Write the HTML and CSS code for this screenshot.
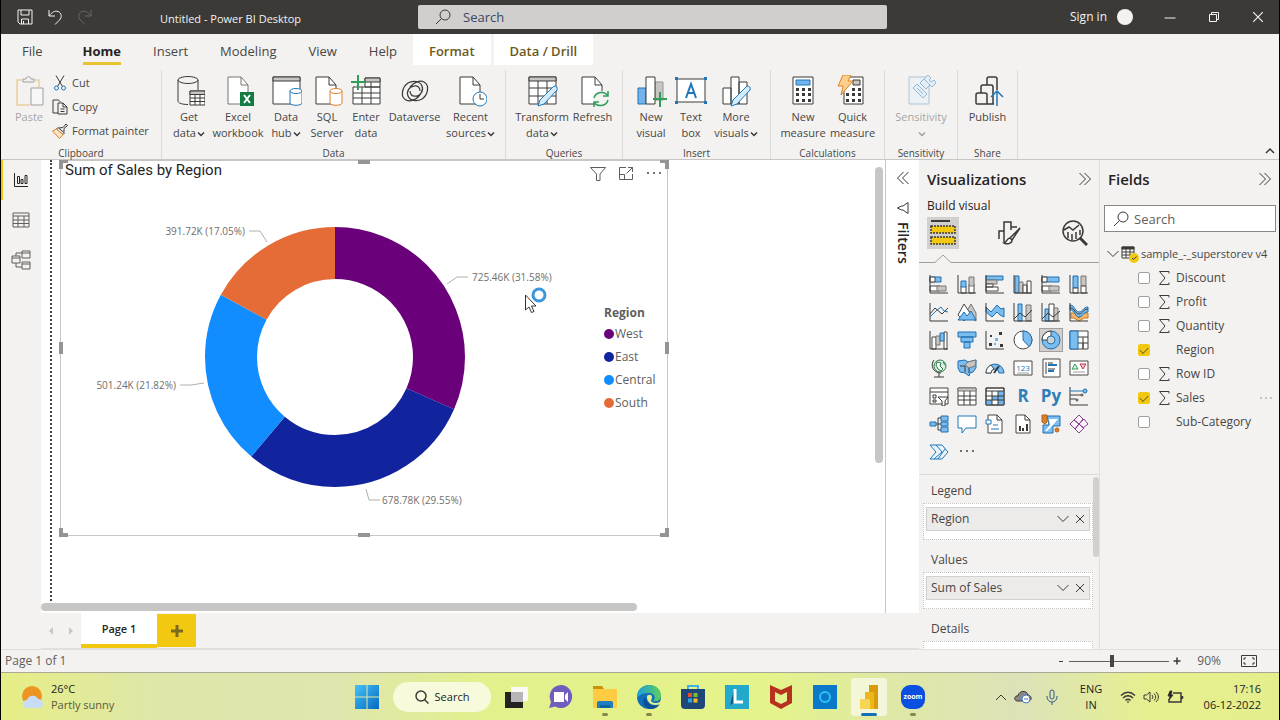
FILE: index.html
```html
<!DOCTYPE html>
<html lang="en">
<head>
    <meta charset="UTF-8">
    <meta name="viewport" content="width=device-width, initial-scale=1.0">
    <title>Untitled - Power BI Desktop</title>
    <link rel="stylesheet" href="styles.css">
</head>
<body>
    <svg class="sprite" aria-hidden="true">
        <symbol id="chev" viewBox="0 0 8 6"><path d="M1 1.5l3 3 3-3"/></symbol>
        <symbol id="chev-wide" viewBox="0 0 12 8"><path d="M0.5 1l5.5 5.5 5.500-5.500"/></symbol>
        <symbol id="dbl-right" viewBox="0 0 14 14"><path d="M1.500 1l6 6-6 6M6.500 1l6 6-6 6"/></symbol>
        <symbol id="dbl-left" viewBox="0 0 14 14"><path d="M7.500 1l-6 6 6 6M12.500 1l-6 6 6 6"/></symbol>
        <symbol id="cross" viewBox="0 0 10 10"><path d="M1 1l8 8M9 1l-8 8"/></symbol>
        <symbol id="lens" viewBox="0 0 16 16"><circle cx="10" cy="6" r="5"/><path d="M6.500 9.500L1 15"/></symbol>
        <symbol id="sigma" viewBox="0 0 12 16"><path d="M11 3.500V1.500H1.500L7 8l-5.500 6.500H11v-2"/></symbol>
    </svg>

    <header class="titlebar">
        <div class="title-left">
            <button class="plain" aria-label="Save"><svg class="icon" width="16" height="16" viewBox="0 0 16 16"><path d="M1 1h14v14H3l-2-2zM4 1v5h8V1M4.500 15v-5h7v5M6.500 12v3"/></svg></button>
            <button class="plain" aria-label="Undo"><svg class="icon" width="16" height="16" viewBox="0 0 16 16"><path d="M2 1v6h6M2 7c3-4 6-5.500 9-4.500 4 1.500 4 6 1.500 8.500L8 15.500"/></svg></button>
            <button class="plain dim" aria-label="Redo"><svg class="icon" width="16" height="16" viewBox="0 0 16 16"><path d="M14 1v6H8M14 7c-3-4-6-5.500-9-4.500-4 1.500-4 6-1.500 8.500L8 15.500"/></svg></button>
            <span class="title">Untitled - Power BI Desktop</span>
        </div>
        <label class="title-search">
            <svg class="icon" width="16" height="16"><use href="#lens"/></svg>
            <input type="text" placeholder="Search" aria-label="Search">
        </label>
        <div class="title-right">
            <a href="#" class="signin">Sign in</a>
            <span class="avatar"></span>
            <button class="plain" aria-label="Minimize"><svg class="icon" width="12" height="12" viewBox="0 0 12 12"><path d="M0.500 7h11"/></svg></button>
            <button class="plain" aria-label="Restore"><svg class="icon" width="12" height="12" viewBox="0 0 12 12"><path d="M1.500 3.500h7v7h-7zM3.500 3.500v-2h7v7h-2"/></svg></button>
            <button class="plain" aria-label="Close"><svg class="icon" width="12" height="12"><use href="#cross"/></svg></button>
        </div>
    </header>

    <nav class="tabs">
        <a href="#" class="tab file">File</a>
        <a href="#" class="tab active">Home</a>
        <a href="#" class="tab">Insert</a>
        <a href="#" class="tab">Modeling</a>
        <a href="#" class="tab">View</a>
        <a href="#" class="tab">Help</a>
        <a href="#" class="tab context">Format</a>
        <a href="#" class="tab context">Data / Drill</a>
    </nav>

    <section class="ribbon">
        <div class="group clipboard">
            <div class="tools">
                <button class="tool faded">
                    <svg class="icon" width="32" height="32" viewBox="0 0 32 32"><path stroke="#e8a33d" stroke-width="1.500" d="M9 5H4v25h13M22 5h4v7"/><path d="M10 7V4h3c0-3 5-3 5 0h3v3z"/><path fill="#fff" d="M18 13h12v17H18z"/></svg>
                    <span>Paste</span>
                </button>
                <div class="stack">
                    <button class="small"><svg class="icon" width="16" height="16" viewBox="0 0 16 16"><path d="M4 0.500l6.500 11M12 0.500l-6.500 11"/><g stroke="#1f77b8"><circle cx="4.500" cy="13" r="2"/><circle cx="11.500" cy="13" r="2"/></g></svg>Cut</button>
                    <button class="small"><svg class="icon" width="16" height="16" viewBox="0 0 16 16"><path d="M6 14H1V1h5.500l2 2M6 4h5l4 4v7H6zM11 4v4h4M8.500 10h4M8.500 12.500h4"/></svg>Copy</button>
                    <button class="small"><svg class="icon" width="16" height="16" viewBox="0 0 16 16"><path d="M7 5l4-0.500L14 1l1.500 1.500L12 5.500 12 9M6 4.500l6.500 5.500-1.500 1.500L4.500 6z"/><path stroke="#d9822b" fill="#fbe3c4" d="M4.500 6L0.500 8l7 7.500 3.500-4z"/></svg>Format painter</button>
                </div>
            </div>
            <div class="caption">Clipboard</div>
        </div>

        <div class="group data">
            <div class="tools">
                <button class="tool"><svg class="icon" width="32" height="32" viewBox="0 0 32 32"><ellipse cx="15" cy="5" rx="10" ry="3.500"/><path d="M5 5v21c0 2 4 3.500 10 3.500M25 5v10"/><path fill="#fff" d="M17 16h15v14H17z"/><path fill="#c8c6c4" d="M17 16h15v3.500H17z"/><path d="M17 23h15M17 26.500h15M22 19v11M27 19v11"/></svg><span>Get<br>data<svg class="icon chev"><use href="#chev"/></svg></span></button>
                <button class="tool"><svg class="icon" width="32" height="32" viewBox="0 0 32 32"><path fill="#fff" stroke="#797775" d="M6 2h13l7 8v19H6z"/><path stroke="#797775" d="M19 2v8h7"/><path fill="#107c41" stroke="none" d="M18 17h14v14H18z"/><path stroke="#fff" stroke-width="2" d="M22 20l6 8M28 20l-6 8"/></svg><span>Excel<br>workbook</span></button>
                <button class="tool"><svg class="icon" width="32" height="32" viewBox="0 0 32 32"><path fill="#fff" d="M3 2h27v27H3z"/><path fill="#c8c6c4" d="M3 2h27v4H3z"/><path fill="#fff" stroke="#1f77b8" d="M20 16v12c0 3 12 3 12 0V16"/><ellipse cx="26" cy="16" rx="6" ry="2.500" fill="#fff" stroke="#1f77b8"/></svg><span>Data<br>hub<svg class="icon chev"><use href="#chev"/></svg></span></button>
                <button class="tool"><svg class="icon" width="32" height="32" viewBox="0 0 32 32"><path fill="#fff" d="M5 2h13l7 8v19H5z"/><path d="M18 2v8h7"/><path fill="#fff" stroke="#d9822b" d="M19 16v12c0 3 12 3 12 0V16"/><ellipse cx="25" cy="16" rx="6" ry="2.500" fill="#fff" stroke="#d9822b"/></svg><span>SQL<br>Server</span></button>
                <button class="tool"><svg class="icon" width="32" height="32" viewBox="0 0 32 32"><path fill="#fff" d="M3 12h27v17H3zM15 3h15v9H15z"/><path fill="#c8c6c4" d="M15 3h15v4H15z"/><path d="M3 18h27M3 23h27M12 12v17M21 7v22"/><path stroke="#2f9e5b" stroke-width="2" d="M8 0v15M1 7h14"/></svg><span>Enter<br>data</span></button>
                <button class="tool"><svg class="icon dv" width="32" height="32" viewBox="0 0 32 32"><path d="M21 20c-4 5-10 7-14 5-6-3-4-13 2-17 5-3 12-2 14 3 2 5-2 10-6 10-4 1-6-2-6-5"/><path d="M11 12c4-5 10-7 14-5 6 3 4 13-2 17-5 3-12 2-14-3-2-5 2-10 6-10 4-1 6 2 6 5"/></svg><span>Dataverse</span></button>
                <button class="tool"><svg class="icon" width="32" height="32" viewBox="0 0 32 32"><path fill="#fff" d="M5 2h13l7 8v19H5z"/><path d="M18 2v8h7"/><circle cx="25" cy="24" r="7" fill="#fff" stroke="#1f77b8"/><path d="M25 19v5h4"/></svg><span>Recent<br>sources<svg class="icon chev"><use href="#chev"/></svg></span></button>
            </div>
            <div class="caption">Data</div>
        </div>

        <div class="group queries">
            <div class="tools">
                <button class="tool"><svg class="icon" width="32" height="32" viewBox="0 0 32 32"><path fill="#fff" d="M3 2h27v27H3z"/><path fill="#c8c6c4" d="M3 2h27v4H3z"/><path d="M3 13h27M3 21h27M12 6v23M21 6v23"/><path fill="#d5ebfa" stroke="#1f77b8" d="M12 31l2-6 14-14q4 0 3 4L18 29z"/></svg><span>Transform<br>data<svg class="icon chev"><use href="#chev"/></svg></span></button>
                <button class="tool"><svg class="icon" width="32" height="32" viewBox="0 0 32 32"><path fill="#fff" d="M5 2h13l7 8v19H5z"/><path d="M18 2v8h7"/><circle cx="24" cy="24" r="8" fill="#f3f2f1" stroke="none"/><path stroke="#2f9e5b" stroke-width="1.500" d="M17 23c2-7 11-7 14-2M31 16v5h-5M31 25c-2 7-11 7-14 2M17 32v-5h5"/></svg><span>Refresh</span></button>
            </div>
            <div class="caption">Queries</div>
        </div>

        <div class="group insert">
            <div class="tools">
                <button class="tool"><svg class="icon" width="32" height="32" viewBox="0 0 32 32"><path fill="#71b3ea" stroke="#1f77b8" d="M3 13h8v16H3z"/><path fill="#c8c6c4" stroke="#979593" d="M20 7h8v18h-8z"/><path fill="#fff" d="M11 2h9v27h-9z"/><path stroke="#2f9e5b" stroke-width="2" d="M25 17v15M18 24h14"/></svg><span>New<br>visual</span></button>
                <button class="tool"><svg class="icon" width="32" height="32" viewBox="0 0 32 32"><path fill="#fff" d="M2 4h28v23H2z"/><path stroke="#1f77b8" stroke-width="2" d="M11 23l5-14 5 14M13 18h6"/><path fill="#1f77b8" stroke="none" d="M0 2h3v3H0zM29 2h3v3h-3zM0 26h3v3H0zM29 26h3v3h-3z"/></svg><span>Text<br>box</span></button>
                <button class="tool"><svg class="icon" width="32" height="32" viewBox="0 0 32 32"><path fill="#fff" d="M3 13h8v16H3zM19 7h8v22h-8zM11 2h8v27h-8z"/><path fill="#d5ebfa" stroke="#1f77b8" d="M11 31l2-6 14-14q4 0 3 4L17 29z"/></svg><span>More<br>visuals<svg class="icon chev"><use href="#chev"/></svg></span></button>
            </div>
            <div class="caption">Insert</div>
        </div>

        <div class="group calc">
            <div class="tools">
                <button class="tool"><svg class="icon" width="32" height="32" viewBox="0 0 32 32"><path fill="#fff" d="M6 2h20v27H6z"/><path fill="#71b3ea" stroke="#1f77b8" d="M9 5h14v5H9z"/><path stroke-width="3" stroke-dasharray="3 3" d="M9 14.500h15M9 19.500h15M9 25.500h15"/></svg><span>New<br>measure</span></button>
                <button class="tool"><svg class="icon" width="32" height="32" viewBox="0 0 32 32"><path fill="#fff" d="M7 2h19v27H7z"/><path fill="#c8c6c4" d="M16 5h7v5h-7z"/><path stroke-width="3" stroke-dasharray="3 3" d="M15 14.500h9M9 19.500h15M9 25.500h15"/><path fill="#fcd08a" stroke="#d9822b" d="M6 0h8l-3 6h5L4 20l2-9H1z"/></svg><span>Quick<br>measure</span></button>
            </div>
            <div class="caption">Calculations</div>
        </div>

        <div class="group sens">
            <div class="tools">
                <button class="tool faded"><svg class="icon" width="32" height="32" viewBox="0 0 32 32"><path fill="#e3f0fa" stroke="#5a8fb5" d="M4 2h20v27H4z"/><g stroke="#1f77b8" fill="#d5ebfa"><path d="M8 13l4-4 10 10-4 4zM12 13l6 6M15 8l4-4 6 6-4 4z"/><path d="M19 4l4-4 3 3-2 2 2 2 3-2 2 3-4 4z"/></g></svg><span>Sensitivity<br><svg class="icon chev"><use href="#chev"/></svg></span></button>
            </div>
            <div class="caption">Sensitivity</div>
        </div>

        <div class="group share">
            <div class="tools">
                <button class="tool"><svg class="icon pub" width="32" height="32" viewBox="0 0 32 32"><path d="M22 29H5q-1 0-1-1V20q0-2 2-2h7q2 0 2 2v9M9 18v-6q0-2 2-2h8q2 0 2 2v17M15 10V4q0-2 2-2h6q2 0 2 2v11"/><path stroke="#1f77b8" stroke-width="1.500" d="M25 31V17M19 22l6-6 6 6"/></svg><span>Publish</span></button>
            </div>
            <div class="caption">Share</div>
        </div>

        <button class="plain collapse" aria-label="Collapse ribbon"><svg class="icon" width="10" height="8" viewBox="0 0 10 8"><path stroke-width="1.500" d="M1 6l4-4 4 4"/></svg></button>
    </section>

    <main class="workspace">
        <nav class="rail">
            <button class="plain on" aria-label="Report"><svg class="icon" width="16" height="16" viewBox="0 0 16 16"><path d="M1.500 1v13.500H15M4.500 4.500h2v7h-2zM8 7.500h2v4H8zM12 3.500h2v8h-2z"/></svg></button>
            <button class="plain" aria-label="Data"><svg class="icon" width="18" height="16" viewBox="0 0 18 16"><path d="M1 1h16v14H1zM1 4h16M1 8h16M1 11.500h16M6 4v11M12 4v11"/></svg></button>
            <button class="plain" aria-label="Model"><svg class="icon" width="20" height="20" viewBox="0 0 20 20"><path d="M1 6h8v7H1zM1 8h8M11 1h8v7h-8zM11 3h8M11 12h8v7h-8zM11 14h8M5 6V3h6M5 13v4h6"/></svg></button>
        </nav>

        <div class="center">
            <div class="stage">
                <div class="canvas">
                    <div class="page">
                        <article class="visual">
                            <i class="grip tl"></i><i class="grip tm"></i><i class="grip tr"></i><i class="grip ml"></i>
                            <i class="grip mr"></i><i class="grip bl"></i><i class="grip bm"></i><i class="grip br"></i>
                            <header class="visual-head">
                                <h2>Sum of Sales by Region</h2>
                                <svg class="icon" width="16" height="16" viewBox="0 0 16 16"><path d="M0.500 1.500h15L10 8v6.500H6.500V8z"/></svg>
                                <svg class="icon" width="16" height="16" viewBox="0 0 16 16"><path d="M8 1.500H1.500v12H14.500V8M1.500 8.500h5v5M8.500 7.500l6-6M10 1.500h4.500V6"/></svg>
                                <svg class="icon more" width="16" height="16" viewBox="0 0 16 16"><circle cx="2" cy="7" r="1"/><circle cx="8" cy="7" r="1"/><circle cx="14" cy="7" r="1"/></svg>
                            </header>
                            <div class="visual-body">
                                <svg class="donut" viewBox="0 0 534 330">
                                    <g transform="rotate(-90 274 172)" fill="none" stroke-width="52">
                                        <circle cx="274" cy="172" r="104" pathLength="100" stroke="#6b007b" stroke-dasharray="31.58 100"/>
                                        <circle cx="274" cy="172" r="104" pathLength="100" stroke="#12239e" stroke-dasharray="29.55 100" stroke-dashoffset="-31.58"/>
                                        <circle cx="274" cy="172" r="104" pathLength="100" stroke="#118dff" stroke-dasharray="21.82 100" stroke-dashoffset="-61.13"/>
                                        <circle cx="274" cy="172" r="104" pathLength="100" stroke="#e66c37" stroke-dasharray="17.05 100" stroke-dashoffset="-82.95"/>
                                    </g>
                                    <path class="leader" d="M386 99l10-7h11M188 46h11l7 11M119 200h11l13-2M305 304l3 11h11"/>
                                    <text x="411" y="96">725.46K (31.58%)</text>
                                    <text x="184" y="50" text-anchor="end">391.72K (17.05%)</text>
                                    <text x="115" y="204" text-anchor="end">501.24K (21.82%)</text>
                                    <text x="321" y="319">678.78K (29.55%)</text>
                                </svg>
                                <div class="legend">
                                    <h3>Region</h3>
                                    <ul>
                                        <li class="west">West</li>
                                        <li class="east">East</li>
                                        <li class="central">Central</li>
                                        <li class="south">South</li>
                                    </ul>
                                </div>
                            </div>
                            <svg class="pointer" width="24" height="28" viewBox="0 0 24 28"><path fill="#fff" stroke="#333" d="M1.500 8v15l3.500-3 2.500 5.500 2.500-1-2.500-5.500h4.500z"/><circle cx="15" cy="8" r="6" fill="#fff" stroke="#3a97dc" stroke-width="3"/></svg>
                        </article>
                    </div>
                    <i class="vscroll"></i>
                    <i class="hscroll"></i>
                </div>
                <aside class="filters">
                    <button class="plain" aria-label="Expand filters"><svg class="icon" width="14" height="14"><use href="#dbl-left"/></svg></button>
                    <svg class="icon" width="12" height="12" viewBox="0 0 12 12"><path d="M11 0.500v11L6 8H4.500L0.500 6l4-2H6z"/></svg>
                    <span>Filters</span>
                </aside>
            </div>
            <footer class="pages">
                <button class="plain nav" aria-label="Previous page"><svg width="6" height="8" viewBox="0 0 6 8"><path d="M5 0v8L1 4z"/></svg></button>
                <button class="plain nav" aria-label="Next page"><svg width="6" height="8" viewBox="0 0 6 8"><path d="M1 0v8l4-4z"/></svg></button>
                <button class="page-tab">Page 1</button>
                <button class="page-add" aria-label="New page"><svg class="icon" width="12" height="12" viewBox="0 0 12 12"><path stroke-width="3" d="M6 0v12M0 6h12"/></svg></button>
            </footer>
        </div>

        <aside class="viz">
            <header class="pane-head"><h2>Visualizations</h2><button class="plain" aria-label="Collapse"><svg class="icon" width="14" height="14"><use href="#dbl-right"/></svg></button></header>
            <h3>Build visual</h3>
            <div class="modes">
                <button class="mode on" aria-label="Build"><svg class="icon" width="28" height="28" viewBox="0 0 28 28"><path stroke-width="2" d="M2 2h19"/><path fill="#f2c811" stroke-width="1.500" stroke-dasharray="2 1" d="M2 7h24v7H2zM2 18h24v7H2z"/></svg></button>
                <button class="mode" aria-label="Format"><svg class="icon" width="26" height="26" viewBox="0 0 26 26"><path stroke-width="1.500" d="M3 19V11h5V2h7v8M15 7h6M8 11v11"/><path fill="#fff" stroke-width="1.500" d="M24 8L14 18l2 2zM14 18c-3 0-3 4-6 5 4 2 8 0 8-3z"/></svg></button>
                <button class="mode" aria-label="Analytics"><svg class="icon" width="26" height="26" viewBox="0 0 26 26"><circle cx="11" cy="11" r="10" stroke-width="1.500"/><path stroke-width="3" d="M18 18l7 7"/><path stroke-width="1.500" d="M2 10l5-3 4 3 6-5M6 12v6M10 14v6M14 12v7M18 10v5"/></svg></button>
            </div>
            <svg class="icon notch" viewBox="0 0 180 10" preserveAspectRatio="xMinYMin slice"><path d="M0 8.500h16l8-7.500 8 7.500h400"/></svg>

            <div class="types">
                <button class="type" aria-label="Stacked bar"><svg class="icon" viewBox="0 0 20 20"><path class="b" d="M1 3h11v5H1z"/><path class="w" d="M1 3h5v5H1zM1 12h10v5H1z"/><path class="g" d="M8 12h9v5H8z"/><path d="M1 1v18h18"/></svg></button>
                <button class="type" aria-label="Stacked column"><svg class="icon" viewBox="0 0 20 20"><path class="w" d="M4 12h5v7H4zM12 10h5v9h-5z"/><path class="b" d="M4 7h5v6H4z"/><path class="g" d="M12 3h5v9h-5z"/><path d="M1 1v18h18"/></svg></button>
                <button class="type" aria-label="Clustered bar"><svg class="icon" viewBox="0 0 20 20"><path class="b" d="M1 2h17v4H1z"/><path class="g" d="M1 6h11v4H1z"/><path class="w" d="M1 10h7v3H1zM1 13h12v4H1z"/><path d="M1 1v18h18"/></svg></button>
                <button class="type" aria-label="Clustered column"><svg class="icon" viewBox="0 0 20 20"><path class="b" d="M2 2h4v17H2z"/><path class="g" d="M6 8h4v11H6z"/><path class="w" d="M10 11h4v8h-4zM14 7h4v12h-4z"/><path d="M1 1v18h18"/></svg></button>
                <button class="type" aria-label="100% stacked bar"><svg class="icon" viewBox="0 0 20 20"><path class="b" d="M1 3h17v5H1z"/><path class="w" d="M1 3h5v5H1zM1 12h10v5H1z"/><path class="g" d="M8 12h10v5H8z"/><path d="M1 1v18h18"/></svg></button>
                <button class="type" aria-label="100% stacked column"><svg class="icon" viewBox="0 0 20 20"><path class="b" d="M4 2h5v12H4z"/><path class="g" d="M12 2h5v10h-5z"/><path class="w" d="M4 14h5v5H4zM12 12h5v7h-5z"/><path d="M1 1v18h18"/></svg></button>

                <button class="type" aria-label="Line"><svg class="icon" viewBox="0 0 20 20"><path d="M1 1v18h18M1 12l5-6 7 6 6-6"/><path class="bl" d="M1 15l6-6 5-4 3 4 4 1"/></svg></button>
                <button class="type" aria-label="Area"><svg class="icon" viewBox="0 0 20 20"><path class="g" d="M8 12l6-10 5 9v8z"/><path class="w" d="M1 13L7 2l6 9-6 8z"/><path class="b" d="M1 18l6-8 3 4 4-5 5 9z"/></svg></button>
                <button class="type" aria-label="Stacked area"><svg class="icon" viewBox="0 0 20 20"><path class="b" d="M1 5l5 5 6-7 4 4 3-1v9l-4-2-3-3-5 5-6-5z"/><path d="M1 1v18h18"/></svg></button>
                <button class="type" aria-label="Line and stacked column"><svg class="icon" viewBox="0 0 20 20"><path class="b" d="M5 2h4v17H5z"/><path class="g" d="M13 3h5v16h-5z"/><path d="M1 1v18h18M1 17l6-6 5 4 7-7"/></svg></button>
                <button class="type" aria-label="Line and clustered column"><svg class="icon" viewBox="0 0 20 20"><path class="b" d="M4 7h4v12H4z"/><path class="w" d="M8 2h5v17H8z"/><path class="g" d="M13 6h4v13h-4z"/><path d="M1 1v18h18M1 17l6-6 5 4 7-6"/></svg></button>
                <button class="type" aria-label="Ribbon"><svg class="icon" viewBox="0 0 20 20"><path class="o" d="M2 11h4l4 5 5-5h4v5h-4l-5 3-5-3H2z"/><path class="b" d="M1 3c5 0 5 7 9 7s4-5 9-5v5c-5 0-5 5-9 5s-4-7-9-7z"/><path d="M1 1v18h18M1 6c5 0 5 6 9 6s4-5 9-5"/></svg></button>

                <button class="type" aria-label="Waterfall"><svg class="icon" viewBox="0 0 20 20"><path class="w" d="M3 7h4v12H3zM15 2h3v17h-3z"/><path class="g" d="M7 6h4v9H7z"/><path class="b" d="M11 3h4v8h-4z"/><path d="M1 1v18h18"/></svg></button>
                <button class="type" aria-label="Funnel"><svg class="icon" viewBox="0 0 20 20"><path class="b" d="M1 2h18v5H1zM4 7h12v5H4zM7 12h6v6H7z"/></svg></button>
                <button class="type" aria-label="Scatter"><svg class="icon" viewBox="0 0 20 20"><path d="M1 1v18h18"/><path fill="#3b3a39" stroke="none" d="M14 2h3v3h-3zM4 13h3v3H4zM15 14h3v3h-3zM5 5h2v2H5z"/><path fill="#71b3ea" stroke="none" d="M10 8h3v3h-3zM9 13h2v2H9z"/></svg></button>
                <button class="type" aria-label="Pie"><svg class="icon" viewBox="0 0 20 20"><circle class="w" cx="10" cy="10" r="9"/><path class="b" d="M10 1a9 9 0 0 1 6 15.500L10 10z"/></svg></button>
                <button class="type on" aria-label="Donut"><svg class="icon" viewBox="0 0 20 20"><circle class="b" cx="10" cy="10" r="9"/><path class="w" d="M10 1a9 9 0 0 0-9 9h5a4 4 0 0 1 4-4z"/><circle fill="#d2d0ce" stroke="#1f77b8" cx="10" cy="10" r="4"/></svg></button>
                <button class="type" aria-label="Treemap"><svg class="icon" viewBox="0 0 20 20"><path class="w" d="M1 1h18v18H1z"/><path class="b" d="M1 1h8v18H1z"/><path d="M9 7h10M9 13h5v6M14 7v12M14 13h5"/></svg></button>

                <button class="type" aria-label="Map"><svg class="icon" viewBox="0 0 20 20"><circle cx="11" cy="8" r="6" fill="#d9efe1" stroke="#2f7d4f"/><path class="gr" d="M8 4l4 1-1 3 3 3-2 2-3-2-2-4zM14 4l2 3"/><path d="M5 2C1 7 4 15 12 15M10 15v4M5 19h10"/></svg></button>
                <button class="type" aria-label="Filled map"><svg class="icon" viewBox="0 0 20 20"><path class="b" d="M1 3l7-1 3 2 8-2v8l-3 4-3 1-1 3-4-3-5-1-2-4z"/><path class="g" d="M8 7l3-3 8-2-1 6-6 2z"/><path d="M3 8h5v6M12 10v5"/></svg></button>
                <button class="type" aria-label="Gauge"><svg class="icon" viewBox="0 0 20 20"><path class="b" d="M1 15a9 9 0 0 1 18 0h-5a4 4 0 0 0-8 0z"/><path class="w" d="M1 15a9 9 0 0 1 5-8l3 4q-3 1-3 4z"/><path stroke-width="2" d="M9 15l5-7"/></svg></button>
                <button class="type" aria-label="Card"><svg class="icon" viewBox="0 0 20 20"><path class="w" d="M1 3h18v14H1z"/><text x="10" y="13">123</text><path d="M4 15h12" stroke="#a19f9d"/></svg></button>
                <button class="type" aria-label="Multi-row card"><svg class="icon" viewBox="0 0 20 20"><path class="w" d="M2 1h17v18H2z"/><path d="M5 4v12"/><path class="bl" stroke-width="2" d="M7 7h9M7 13h6"/><path d="M7 5h5M7 11h7"/></svg></button>
                <button class="type" aria-label="KPI"><svg class="icon" viewBox="0 0 20 20"><path class="w" d="M1 3h18v14H1z"/><path fill="#d9efe1" stroke="#2f9e5b" d="M3 11l3-5 3 5z"/><path fill="#f7c5cc" stroke="#c4314b" d="M11 6h6l-3 5z"/><path stroke="#a19f9d" d="M4 14h12"/></svg></button>

                <button class="type" aria-label="Slicer"><svg class="icon" viewBox="0 0 20 20"><path class="w" d="M1 2h18v16H1z"/><path d="M1 6h18M4 9h3v3H4zM4 14h3v2H4z"/><path fill="#fff" d="M9 11h10l-3 4v5h-3v-5z"/></svg></button>
                <button class="type" aria-label="Table"><svg class="icon" viewBox="0 0 20 20"><path class="w" d="M1 2h18v17H1z"/><path class="g" d="M1 2h18v3H1z"/><path d="M1 10h18M1 14h18M7 5v14M13 5v14"/></svg></button>
                <button class="type" aria-label="Matrix"><svg class="icon" viewBox="0 0 20 20"><path class="w" d="M1 2h18v17H1z"/><path fill="#71b3ea" stroke="none" d="M13 5h6v14h-6zM7 10h6v4H7zM1 14h6v5H1z"/><path d="M1 2h18v17H1zM1 5h18M1 10h18M1 14h18M7 5v14M13 5v14"/></svg></button>
                <button class="type script-type">R</button>
                <button class="type script-type">Py</button>
                <button class="type" aria-label="Key influencers"><svg class="icon" viewBox="0 0 20 20"><path d="M1 1v18h18M1 9h11M1 13h6"/><path class="bl" d="M1 5h13"/><circle class="b" cx="16" cy="5" r="2"/><circle cx="13" cy="9" r="1"/><circle cx="8" cy="14" r="1"/></svg></button>

                <button class="type" aria-label="Decomposition tree"><svg class="icon" viewBox="0 0 20 20"><path class="b" d="M1 8h6v4H1zM12 2h7v5h-7zM12 8h7v4h-7zM12 13h7v5h-7z"/><path d="M7 10h5M12 4H9v12h3"/></svg></button>
                <button class="type" aria-label="Q&amp;A"><svg class="icon" viewBox="0 0 20 20"><path fill="#fff" stroke="#1f77b8" d="M1 2h18v12H9l-4 5v-5H1z"/></svg></button>
                <button class="type" aria-label="Narrative"><svg class="icon" viewBox="0 0 20 20"><path class="w" d="M3 1h9l5 5v13H3z"/><path d="M12 1v5h5"/><path class="bl" d="M8 11h5M6 15h8M1 6h5v4H1z" fill="#fff"/></svg></button>
                <button class="type" aria-label="Paginated report"><svg class="icon" viewBox="0 0 20 20"><path class="w" d="M3 1h9l5 5v13H3z"/><path d="M12 1v5h5"/><path stroke-width="2" d="M7 17v-5M10 17v-3M14 17v-7"/></svg></button>
                <button class="type" aria-label="ArcGIS"><svg class="icon" viewBox="0 0 20 20"><path class="b" d="M6 2h13v10h-7v7H2v-8h6z"/><path fill="#fff" stroke="none" d="M8 5h9l-5 6-6 6H4l5-6z"/><path fill="#d9822b" stroke="#b7600f" d="M1 1h5v7l-2 2-3-2z"/><circle cx="16" cy="16" r="2" fill="#d9822b" stroke="#b7600f"/></svg></button>
                <button class="type" aria-label="Power Apps"><svg class="icon" viewBox="0 0 20 20"><g fill="#fbf5fb" stroke="#8a3f91"><path d="M10 1l4 4-4 5-5-4zM5 6l5 4-4 5-5-5zM15 5l4 5-5 4-4-4zM10 10l5 4-5 5-4-4z"/></g></svg></button>

                <button class="type" aria-label="Power Automate"><svg class="icon" viewBox="0 0 20 20"><g fill="#e9f4fc" stroke="#1f77b8"><path d="M1 3h12l6 7-6 7H1l6-7zM7 3l6 7-8 7M9 17l7-10"/></g></svg></button>
                <button class="type" aria-label="More visuals"><svg class="icon more" viewBox="0 0 20 20"><circle cx="4" cy="9" r="1"/><circle cx="10" cy="9" r="1"/><circle cx="16" cy="9" r="1"/></svg></button>
            </div>

            <div class="wells">
                <i class="thumb"></i>
                <h4>Legend</h4>
                <div class="well"><div class="pill"><span>Region</span><svg class="icon" width="12" height="8"><use href="#chev-wide"/></svg><svg class="icon" width="10" height="10"><use href="#cross"/></svg></div></div>
                <h4>Values</h4>
                <div class="well"><div class="pill"><span>Sum of Sales</span><svg class="icon" width="12" height="8"><use href="#chev-wide"/></svg><svg class="icon" width="10" height="10"><use href="#cross"/></svg></div></div>
                <h4>Details</h4>
                <div class="well"></div>
            </div>
        </aside>

        <aside class="fields">
            <header class="pane-head"><h2>Fields</h2><button class="plain" aria-label="Collapse"><svg class="icon" width="14" height="14"><use href="#dbl-right"/></svg></button></header>
            <label class="field-search">
                <svg class="icon" width="16" height="16"><use href="#lens"/></svg>
                <input type="text" placeholder="Search" aria-label="Search fields">
            </label>
            <div class="table-row">
                <svg class="icon" width="12" height="8"><use href="#chev-wide"/></svg>
                <svg class="icon" width="18" height="18" viewBox="0 0 18 18"><path fill="#fff" d="M1 2h12v11H1z"/><path fill="#3b3a39" d="M1 2h12v2H1z"/><path d="M1 7h12M1 10h12M5 4v9M9 4v9"/><circle cx="13" cy="13" r="5" fill="#f2c811" stroke="none"/><path d="M11 13l1.500 1.500 3-3"/></svg>
                <span>sample_-_superstorev v4</span>
            </div>
            <ul class="field-list">
                <li><label><input type="checkbox"><svg class="icon sum"><use href="#sigma"/></svg><span>Discount</span></label></li>
                <li><label><input type="checkbox"><svg class="icon sum"><use href="#sigma"/></svg><span>Profit</span></label></li>
                <li><label><input type="checkbox"><svg class="icon sum"><use href="#sigma"/></svg><span>Quantity</span></label></li>
                <li><label><input type="checkbox" checked><i class="sum"></i><span>Region</span></label></li>
                <li><label><input type="checkbox"><svg class="icon sum"><use href="#sigma"/></svg><span>Row ID</span></label></li>
                <li><label><input type="checkbox" checked><svg class="icon sum"><use href="#sigma"/></svg><span>Sales</span></label><svg class="icon row-more" width="12" height="4" viewBox="0 0 12 4"><path stroke-dasharray="1 4" d="M0.500 2h11"/></svg></li>
                <li><label><input type="checkbox"><i class="sum"></i><span>Sub-Category</span></label></li>
            </ul>
        </aside>
    </main>

    <footer class="status">
        <span class="page-count">Page 1 of 1</span>
        <button class="plain" aria-label="Zoom out"><svg class="icon" width="8" height="8" viewBox="0 0 8 8"><path d="M2 4.500h4"/></svg></button>
        <input type="range" class="zoom" min="10" max="200" value="90" aria-label="Zoom">
        <button class="plain" aria-label="Zoom in"><svg class="icon" width="8" height="8" viewBox="0 0 8 8"><path stroke-width="1.500" d="M4 0.500v7M0.500 4h7"/></svg></button>
        <span class="percent">90%</span>
        <button class="plain" aria-label="Fit to page"><svg class="icon" width="16" height="12" viewBox="0 0 16 12"><path d="M0.500 0.500h15v11H0.500zM3 5V3h2M11 3h2v2M13 7v2h-2M5 9H3V7"/></svg></button>
    </footer>

    <footer class="taskbar">
        <div class="weather">
            <svg width="24" height="24" viewBox="0 0 24 24"><circle cx="11" cy="11" r="10" fill="#ee9422"/><path fill="#c9dcf5" d="M6 23a4 4 0 0 1 0-8 6 6 0 0 1 11-1 4.500 4.500 0 0 1 1 9z"/></svg>
            <div>26°C<br><span>Partly sunny</span></div>
        </div>
        <div class="apps">
            <button class="app" aria-label="Start"><svg width="24" height="24" viewBox="0 0 24 24"><defs><linearGradient id="win" x2="1" y2="1"><stop offset="0" stop-color="#45c3f5"/><stop offset="1" stop-color="#0468c4"/></linearGradient></defs><path fill="url(#win)" d="M0 0h11.500v11.500H0zM12.500 0H24v11.500H12.500zM0 12.500h11.500V24H0zM12.500 12.500H24V24H12.500z"/></svg></button>
            <button class="task-search"><svg class="icon" width="14" height="14" viewBox="0 0 14 14"><circle cx="6" cy="6" r="5" stroke-width="1.500"/><path stroke-width="1.500" d="M9.500 9.500L13.500 13.500"/></svg>Search</button>
            <button class="app" aria-label="Task view"><svg width="24" height="24" viewBox="0 0 24 24"><path fill="#fbfbf5" d="M6 2h17v14H6z"/><path fill="#25221f" d="M0 7h18v16H0z"/><path fill="#b9b4b8" d="M6 7h12v10H6z"/></svg></button>
            <button class="app" aria-label="Chat"><svg width="24" height="24" viewBox="0 0 24 24"><path fill="#6f5ebd" d="M12 0a11.500 11.500 0 1 1-6 21.500L0 23l2-6A11.500 11.500 0 0 1 12 0z"/><path fill="#fff" d="M5 7h10v10H5zM16 10l3-3v10l-3-3z"/></svg></button>
            <button class="app open" aria-label="File Explorer"><svg width="24" height="24" viewBox="0 0 24 24"><path fill="#c9920a" d="M0 1h9l2 3v4H0z"/><path fill="#ffcb42" d="M0 4h24v19H0z"/><path fill="#1c7fc0" d="M4 23v-5q0-2 2-2h12q2 0 2 2v5z"/><path fill="#12629c" d="M7 20h10v3H7z"/></svg></button>
            <button class="app open" aria-label="Edge"><svg width="24" height="24" viewBox="0 0 24 24"><defs><linearGradient id="edge" x2="1"><stop offset="0" stop-color="#1aa0dd"/><stop offset="1" stop-color="#5fce58"/></linearGradient></defs><circle cx="12" cy="12" r="12" fill="#0f6fb8"/><path fill="url(#edge)" d="M0 11C2-4 24-3 24 11c0 4-4 6-8 5 4-4 0-8-4-8C7 8 3 9 0 13z"/><path fill="#0d4f92" d="M8 12c-4 5 0 12 6 12 4 0 7-2 9-5-6 4-14 0-15-7z"/><path fill="#e5f18e" d="M10 12c0-3 5-3 5 0 0 2-1 3-1 4 2 3 7 2 9 1l0 2c-7 3-13-1-13-7z"/></svg></button>
            <button class="app" aria-label="Microsoft Store"><svg width="24" height="24" viewBox="0 0 24 24"><path fill="none" stroke="#3fb2e8" stroke-width="2" d="M7 5V1h10v4"/><path fill="#1d4778" d="M0 4h24v16q0 4-4 4H4q-4 0-4-4z"/><path fill="#e8512a" d="M7 8h4v4H7z"/><path fill="#80bb2c" d="M12.500 8h4v4h-4z"/><path fill="#27a5e4" d="M7 13.500h4v4H7z"/><path fill="#fcb821" d="M12.500 13.500h4v4h-4z"/></svg></button>
            <button class="app" aria-label="Lens"><svg width="24" height="24" viewBox="0 0 24 24"><path fill="#23a9cb" d="M0 0h24v24H0z"/><path fill="#145a72" d="M9 5v13l-4 2z"/><path stroke="#fff" stroke-width="3" fill="none" d="M10 4v13h8"/></svg></button>
            <button class="app" aria-label="McAfee"><svg width="24" height="24" viewBox="0 0 24 24"><path fill="#b6321f" d="M1 0l11 5 11-5v18l-11 6-11-6zM6 7v9l6 3 6-3V7l-6 3z"/></svg></button>
            <button class="app" aria-label="Cortana"><svg width="24" height="24" viewBox="0 0 24 24"><path fill="#0a79c9" d="M0 0h24v24H0z"/><circle cx="12" cy="12" r="5" fill="none" stroke="#2cc1ee" stroke-width="2"/></svg></button>
            <button class="app current" aria-label="Power BI"><svg width="24" height="24" viewBox="0 0 24 24"><path fill="#d99a0b" d="M12 0h8q1 0 1 1v23h-9z"/><path fill="#edb61c" d="M8 7h8q1 0 1 1v16H8z"/><path fill="#f7d655" d="M3 14h8q2 0 2 2v8H3z"/></svg></button>
            <button class="app open" aria-label="Zoom"><svg class="zoom-logo" width="24" height="24" viewBox="0 0 24 24"><rect width="24" height="24" rx="9" fill="#0b4fe0"/><text x="12" y="14">zoom</text></svg></button>
        </div>
        <div class="tray">
            <svg class="icon" width="12" height="8" viewBox="0 0 12 8"><path d="M1 7l5-5 5 5"/></svg>
            <svg class="icon" width="18" height="14" viewBox="0 0 18 14"><path fill="#8a8886" d="M3 11c-4-1-2-6 1-5 1-6 9-6 10-1 4 1 4 5 1 6z"/><circle cx="12" cy="9" r="4" fill="#fff" stroke="#4a7bc0"/><path stroke="#4a7bc0" d="M10 9h4"/></svg>
            <svg class="icon mic" width="12" height="16" viewBox="0 0 12 16"><path stroke="#33598a" d="M4 3a2 2 0 0 1 4 0v5a2 2 0 0 1-4 0zM1 7v1a5 5 0 0 0 10 0V7M6 13v3"/></svg>
            <div class="lang">ENG<br>IN</div>
            <svg class="icon" width="16" height="12" viewBox="0 0 16 12"><path stroke-width="1.500" d="M1 4.500q7-6.500 14 0M3 7q5-4.500 10 0M5.500 9.500q2.500-2.500 5 0"/><circle cx="8" cy="11" r="0.500"/></svg>
            <svg class="icon" width="16" height="12" viewBox="0 0 16 12"><path d="M1 4h2.500L7 1v10L3.500 8H1zM9 4q2 2 0 4M11 2.500q3.500 3.500 0 7M13 1q5 5 0 10"/></svg>
            <svg class="icon" width="18" height="14" viewBox="0 0 18 14"><path stroke-width="1.500" d="M7 3h8v9H3V9M16.500 6v3"/><path fill="#222" d="M4 1L2 6h2l-1 4 4-5H5l1-4z"/></svg>
            <div class="clock">17:16<br>06-12-2022</div>
        </div>
    </footer>
</body>
</html>
```
FILE: styles.css
```css
* {
    box-sizing: border-box;
}
body {
    display: flex;
    flex-direction: column;
    height: 100vh;
    margin: 0;
    overflow: hidden;
    border: solid #000;
    border-width: 0 1px;
    background: #f3f2f1;
    color: #484644;
    font-family: "Open Sans", "Noto Sans", sans-serif;
    font-size: 12px;
    line-height: 16px;
}
h2, h3, h4, ul {
    margin: 0;
    padding: 0;
    list-style: none;
}
a {
    color: inherit;
    text-decoration: none;
}
button, input {
    margin: 0;
    padding: 0;
    border: 0;
    background: none;
    color: inherit;
    font: inherit;
}
svg {
    display: block;
    flex: none;
}
.sprite {
    position: absolute;
    width: 0;
    height: 0;
}
.icon {
    fill: none;
    stroke: #3b3a39;
}
.more {
    fill: #484644;
    stroke: none;
}
.plain {
    display: flex;
    align-items: center;
    justify-content: center;
}

/* title bar */
.titlebar {
    display: grid;
    grid-template-columns: 417px 1fr 392px;
    align-items: center;
    height: 34px;
    background: #3b3a37;
    color: #f3f2f1;
}
.titlebar .plain .icon {
    stroke: #f3f2f1;
}
.titlebar .dim .icon {
    stroke: #6b6966;
}
.title-left {
    display: flex;
    align-items: center;
    gap: 14px;
    padding-left: 16px;
}
.title {
    margin-left: 53px;
    padding-top: 4px;
    font-size: 11px;
}
.title-search {
    display: flex;
    align-items: center;
    gap: 12px;
    height: 24px;
    padding-left: 17px;
    border-radius: 2px;
    background: #d0cfcd;
}
.title-search input {
    flex: 1;
    font-size: 13px;
}
.title-search input::placeholder {
    color: #3d4766;
}
.title-right {
    display: flex;
    align-items: center;
    justify-content: flex-end;
    padding-right: 15px;
}
.avatar {
    width: 16px;
    height: 16px;
    margin: 0 31px 0 10px;
    border-radius: 50%;
    background: #f3f2f1;
}
.title-right .plain + .plain {
    margin-left: 32px;
}

/* ribbon tabs */
.tabs {
    display: flex;
    height: 31px;
    padding-left: 5px;
    font-size: 13px;
}
.tab {
    display: flex;
    align-items: center;
    padding: 2px 16px 0;
}
.tab.file {
    margin-right: 8px;
}
.tab.active {
    color: #252423;
    font-weight: 700;
    background: linear-gradient(#e6c430, #e6c430) center bottom / 38px 3px no-repeat;
}
.tab.context {
    margin-right: 3px;
    background: #fff;
    color: #6b5a1e;
    font-weight: 600;
}

/* ribbon */
.ribbon {
    display: flex;
    height: 95px;
    border-bottom: 1px solid #c8c6c4;
}
.group {
    display: flex;
    flex-direction: column;
    justify-content: space-between;
    margin-top: 5px;
    border-right: 1px solid #dcdad8;
}
.tools {
    display: grid;
    padding-top: 5px;
}
.caption {
    font-size: 10px;
    line-height: 12px;
    text-align: center;
}
.tool {
    display: flex;
    flex-direction: column;
    align-items: center;
    gap: 2px;
    white-space: nowrap;
    font-size: 11px;
}
.faded {
    opacity: 0.45;
}
.chev {
    display: inline-block;
    width: 8px;
    height: 6px;
    margin-left: 1px;
    stroke-width: 1.5;
}
.clipboard .tools {
    grid-template-columns: 46px 106px;
    padding: 5px 3px 0 5px;
}
.data .tools {
    grid-template-columns: 46px 52px 44px 38px 40px 57px 55px;
    padding: 5px 7px 0 4px;
}
.queries .tools {
    grid-template-columns: 56px 45px;
    padding: 5px 7px 0 8px;
}
.insert .tools {
    grid-template-columns: 40px 40px 50px;
    padding: 5px 9px 0 8px;
}
.calc .tools {
    grid-template-columns: 50px 49px;
    padding: 5px 7px 0 7px;
}
.sens .tools {
    grid-template-columns: 72px;
}
.share .tools {
    grid-template-columns: 59px;
}
.dv {
    stroke-width: 1.25;
}
.pub {
    stroke-width: 1.5;
}
.stack {
    display: flex;
    flex-direction: column;
    gap: 8px;
}
.small {
    display: flex;
    align-items: center;
    gap: 4px;
    height: 16px;
    white-space: nowrap;
    font-size: 11px;
}
.collapse {
    align-self: flex-end;
    margin: 0 4px 4px auto;
}

/* workspace */
.workspace {
    display: flex;
    flex: 1;
    min-height: 0;
}
.rail {
    display: flex;
    flex-direction: column;
    width: 40px;
}
.rail .plain {
    height: 40px;
}
.rail .icon {
    stroke: #605e5c;
}
.rail .on {
    box-shadow: inset 2px 0 #f2c811;
}
.rail .on .icon {
    stroke: #252423;
}
.center {
    display: flex;
    flex: 1;
    flex-direction: column;
    min-width: 0;
}
.stage {
    display: flex;
    flex: 1;
    min-height: 0;
}
.canvas {
    position: relative;
    flex: 1;
    padding: 0 0 12px 9px;
    background: #fff;
}
.page {
    height: 100%;
    padding-left: 8px;
    border-left: 2px dotted #444;
}
.visual {
    position: relative;
    display: flex;
    flex-direction: column;
    max-width: 608px;
    height: 376px;
    border: 1px solid #c8c6c4;
}
.grip {
    position: absolute;
    width: 9px;
    height: 9px;
    border: 0 solid #979593;
}
.tl { top: -1px; left: -2px; border-width: 3px 0 0 4px; }
.tr { top: -1px; right: -2px; border-width: 3px 4px 0 0; }
.bl { bottom: -2px; left: -2px; border-width: 0 0 4px 4px; }
.br { bottom: -2px; right: -2px; border-width: 0 4px 4px 0; }
.tm, .bm { left: 50%; width: 12px; height: 4px; margin-left: -6px; background: #979593; }
.ml, .mr { top: 50%; width: 4px; height: 12px; margin-top: -6px; background: #979593; }
.tm { top: -1px; }
.bm { bottom: -2px; }
.ml { left: -2px; }
.mr { right: -2px; }
.visual-head {
    display: flex;
    gap: 12px;
    padding: 0 5px 0 4px;
}
.visual-head .icon {
    margin-top: 5px;
}
.visual-head .icon:not(.more) {
    stroke: #605e5c;
}
.visual-head h2 {
    flex: 1;
    color: #252423;
    font: 400 15px/18px Roboto, sans-serif;
}
.visual-body {
    display: flex;
    flex: 1;
    padding-top: 3px;
}
.donut {
    flex: 1;
    align-self: flex-start;
}
.donut text {
    fill: #706e6c;
    font-size: 10px;
}
.leader {
    fill: none;
    stroke: #b3b0ad;
}
.legend {
    width: 72px;
    padding: 119px 0 0 9px;
    color: #605e5c;
}
.legend h3 {
    font-size: 12px;
    line-height: 18px;
}
.legend li {
    display: flex;
    align-items: center;
    gap: 1px;
    height: 23px;
}
.legend li::before {
    content: "";
    width: 10px;
    height: 10px;
    border-radius: 50%;
    background: #6b007b;
}
.legend .east::before { background: #12239e; }
.legend .central::before { background: #118dff; }
.legend .south::before { background: #e66c37; }
.pointer {
    position: absolute;
    top: 126px;
    left: 463px;
}
.vscroll, .hscroll {
    position: absolute;
    border-radius: 4px;
    background: #c8c6c4;
}
.vscroll {
    top: 7px;
    right: 2px;
    width: 8px;
    height: 296px;
}
.hscroll {
    bottom: 2px;
    left: 0;
    width: 596px;
    height: 8px;
}
.filters {
    display: flex;
    flex-direction: column;
    align-items: center;
    width: 34px;
    padding-top: 11px;
    border-left: 1px solid #c8c6c4;
    background: #fff;
    color: #252423;
}
.filters > .icon {
    margin: 17px 0 8px;
}
.filters span {
    writing-mode: vertical-rl;
    font-size: 14px;
    font-weight: 600;
}

/* page tabs */
.pages {
    display: flex;
    height: 36px;
    border-bottom: 1px solid #e1dfdd;
}
.nav {
    width: 20px;
    fill: #c8c6c4;
}
.page-tab {
    width: 76px;
    border-bottom: 4px solid #f2c811;
    background: #fff;
    color: #252423;
    font-size: 11px;
    font-weight: 600;
}
.page-add {
    display: flex;
    align-items: center;
    justify-content: center;
    width: 39px;
    height: 33px;
    margin-top: 1px;
    background: #f2c811;
}
.page-add .icon {
    stroke: #7b6a22;
}

/* visualizations pane */
.viz {
    display: flex;
    flex-direction: column;
    width: 181px;
    border-right: 1px solid #e1dfdd;
}
.pane-head {
    display: flex;
    align-items: center;
    justify-content: space-between;
    height: 38px;
    padding: 0 7px 0 8px;
    color: #252423;
}
.pane-head h2 {
    font-size: 15px;
    font-weight: 600;
}
.viz h3 {
    padding-left: 8px;
    color: #252423;
    font-size: 12px;
    font-weight: 400;
}
.modes {
    display: flex;
    justify-content: space-between;
    margin-top: 3px;
    padding: 0 8px;
}
.mode {
    display: flex;
    align-items: center;
    justify-content: center;
    width: 32px;
    height: 32px;
}
.mode.on {
    background: #d2d0ce;
}
.notch {
    width: 100%;
    height: 10px;
    margin-top: 5px;
    stroke: #a19f9d;
}
.types {
    display: grid;
    grid-template-columns: repeat(6, 28px);
    grid-auto-rows: 28px;
    padding: 6px 0 0 6px;
}
.type {
    display: flex;
    align-items: center;
    justify-content: center;
}
.type .icon {
    width: 20px;
    height: 20px;
}
.type.on {
    margin: 2px;
    border: 1px solid #a19f9d;
    background: #d2d0ce;
}
.type .b { fill: #7cbdf0; stroke: #1f6fae; }
.type .g { fill: #c8c6c4; stroke: #797775; }
.type .w { fill: #fff; stroke: #484644; }
.type .o { fill: #f5b56b; stroke: #c87a1f; }
.type .bl { stroke: #1f77b8; }
.type .gr { stroke: #2f7d4f; fill: #fff; }
.type text {
    fill: #1f77b8;
    stroke: none;
    font-size: 8px;
    text-anchor: middle;
}
.script-type {
    color: #2f7fb8;
    font-size: 17px;
    font-weight: 700;
}
.wells {
    position: relative;
    flex: 1;
    min-height: 0;
    margin-top: 8px;
    padding: 6px 6px 0 4px;
    border-top: 1px solid #dcdad8;
    overflow: hidden;
}
.wells h4 {
    padding: 2px 0 4px 8px;
    font-size: 12px;
    font-weight: 400;
}
.well {
    height: 37px;
    margin-bottom: 10px;
    padding: 3px 2px;
    border: 1px dotted #c8c6c4;
    background: #fff;
}
.pill {
    display: flex;
    align-items: center;
    gap: 6px;
    height: 24px;
    padding: 0 4px 0 4px;
    border: 1px solid #d2d0ce;
    background: #edebe9;
}
.pill span {
    flex: 1;
}
.thumb {
    position: absolute;
    top: 2px;
    right: 0;
    width: 6px;
    height: 80px;
    border-radius: 3px;
    background: #d2d0ce;
}

/* fields pane */
.fields {
    width: 179px;
}
.field-search {
    display: flex;
    align-items: center;
    gap: 5px;
    height: 27px;
    margin: 7px 3px 10px 4px;
    padding-left: 8px;
    border: 1px solid #8a8886;
    background: #fff;
}
.field-search input {
    flex: 1;
    min-width: 0;
    font-size: 13px;
}
.field-search input::placeholder {
    color: #605e5c;
}
.table-row {
    display: flex;
    align-items: center;
    gap: 2px;
    height: 24px;
    padding-left: 7px;
    white-space: nowrap;
    font-size: 11px;
}
.field-list li {
    display: flex;
    align-items: center;
    justify-content: space-between;
    height: 24px;
    padding: 0 7px 0 38px;
}
.field-list label {
    display: flex;
    align-items: center;
}
.field-list input {
    appearance: none;
    width: 12px;
    height: 12px;
    border: 1px solid #a19f9d;
    border-radius: 2px;
    background: #fff;
}
.field-list input:checked {
    border-color: #f2c811;
    background: #f2c811;
}
.field-list input:checked::before {
    content: "";
    display: block;
    width: 7px;
    height: 4px;
    margin: 2px 1px;
    border: solid #7a6a1c;
    border-width: 0 0 1px 1px;
    transform: rotate(-45deg);
}
.sum {
    width: 12px;
    height: 16px;
    margin: 0 6px 0 8px;
}

/* status bar */
.status {
    display: flex;
    align-items: center;
    height: 24px;
    padding: 0 22px 0 4px;
    border-top: 1px solid #e1dfdd;
    border-bottom: 1px solid #a8a896;
    color: #605e5c;
}
.page-count {
    flex: 1;
}
.zoom {
    appearance: none;
    width: 100px;
    height: 12px;
    margin: 0 4px;
    background: linear-gradient(#605e5c, #605e5c) center / 100% 1px no-repeat;
}
.zoom::-webkit-slider-thumb {
    appearance: none;
    width: 4px;
    height: 12px;
    background: #484644;
}
.percent {
    margin: 0 20px 0 16px;
}

/* taskbar */
.taskbar {
    display: grid;
    grid-template-columns: 1fr auto 1fr;
    align-items: center;
    height: 47px;
    background: linear-gradient(90deg, #e6ee86 0, #dfe6a8 12%, #dfe5ae 26%, #e4f08c 38%, #e5f38a 60%, #dfe8a6 70%, #dde2b8 80%, #e6f08e 90%, #e4ee8c 100%);
    color: #222;
}
.weather {
    display: flex;
    align-items: center;
    gap: 6px;
    padding-left: 20px;
    font-size: 11px;
}
.weather span {
    color: #5c5c3a;
}
.apps {
    display: flex;
    align-items: center;
    gap: 8px;
}
.app {
    position: relative;
    display: flex;
    align-items: center;
    justify-content: center;
    width: 36px;
    height: 38px;
}
.current {
    border-radius: 3px;
    background: rgba(255, 255, 255, 0.6);
}
.open::after, .current::after {
    content: "";
    position: absolute;
    bottom: 0;
    left: 50%;
    width: 6px;
    height: 3px;
    margin-left: -3px;
    border-radius: 2px;
    background: #85884d;
}
.current::after {
    width: 16px;
    margin-left: -8px;
    background: #1670b8;
}
.zoom-logo text {
    fill: #fff;
    font-size: 7px;
    font-weight: 700;
    text-anchor: middle;
}
.task-search {
    display: flex;
    align-items: center;
    justify-content: center;
    gap: 6px;
    width: 98px;
    height: 30px;
    border-radius: 15px;
    background: #f7fbdc;
    font-size: 11px;
}
.tray {
    display: flex;
    align-items: center;
    justify-content: flex-end;
    gap: 7px;
    padding-right: 18px;
}
.mic {
    margin: 0 4px 0 7px;
}
.lang {
    width: 44px;
    text-align: center;
    font-size: 11px;
}
.clock {
    width: 70px;
    text-align: right;
    font-size: 11px;
}
```
